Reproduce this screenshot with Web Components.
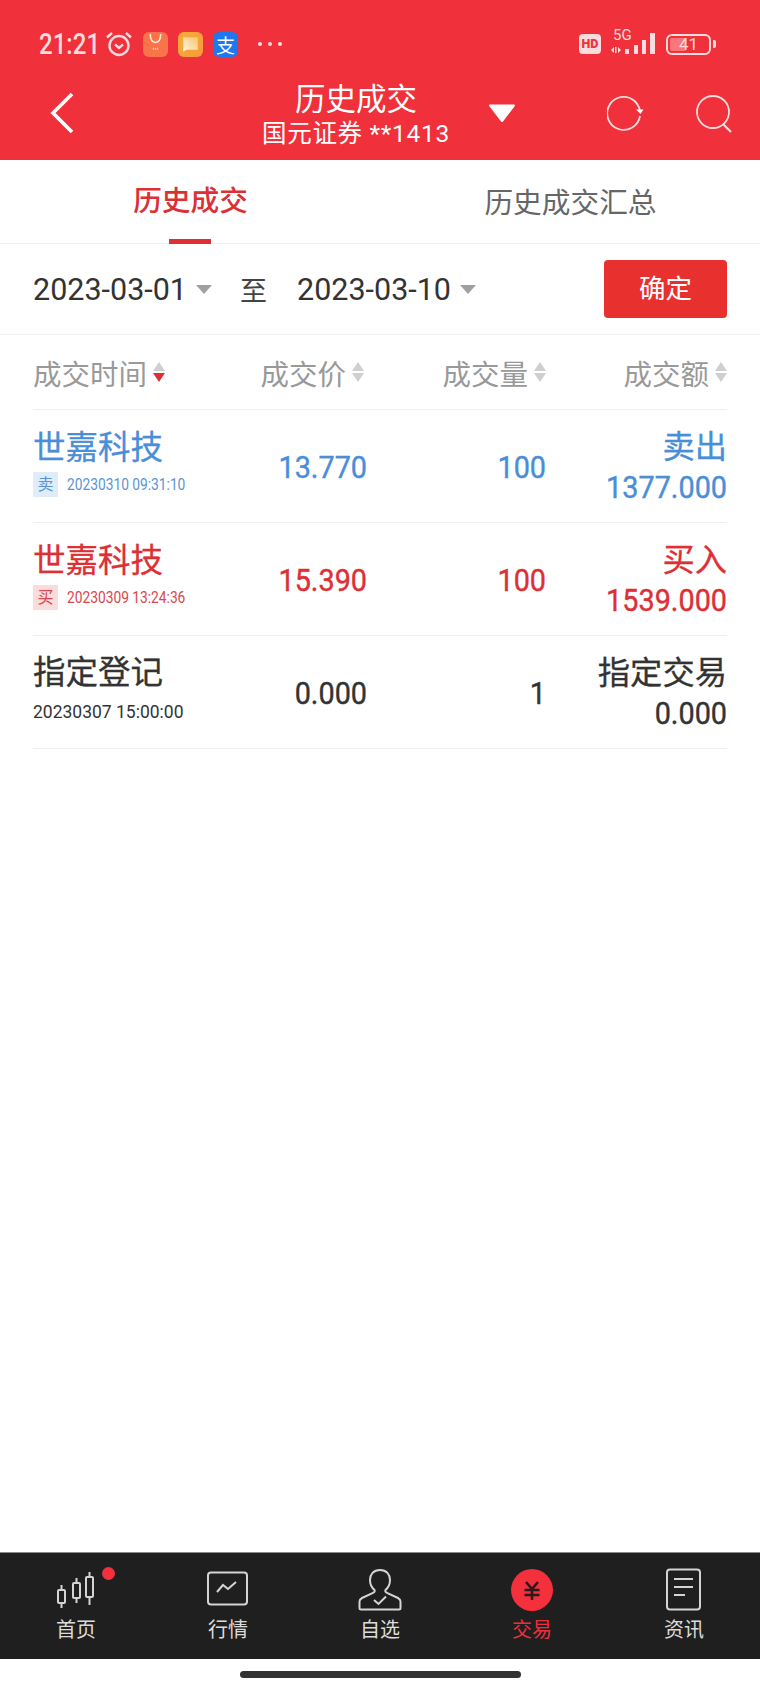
<!DOCTYPE html>
<html lang="zh">
<head>
<meta charset="utf-8">
<title>历史成交</title>
<style>
  html, body { margin: 0; padding: 0; background: #fff; }
  body { font-family: Roboto, "Noto Sans CJK SC", sans-serif; }
  trade-app { width: 760px; height: 1689px; }
</style>
</head>
<body>
<trade-app>
  <status-bar slot="top"></status-bar>
  <nav-header slot="top" title="历史成交" account="国元证券 **1413"></nav-header>
  <tab-strip>
    <tab-item active>历史成交</tab-item>
    <tab-item>历史成交汇总</tab-item>
  </tab-strip>
  <date-filter from="2023-03-01" to="2023-03-10"></date-filter>
  <column-head></column-head>
  <trade-row kind="sell" name="世嘉科技" tag="卖" time="20230310 09:31:10" price="13.770" volume="100" action="卖出" amount="1377.000"></trade-row>
  <trade-row kind="buy" name="世嘉科技" tag="买" time="20230309 13:24:36" price="15.390" volume="100" action="买入" amount="1539.000"></trade-row>
  <trade-row kind="plain" name="指定登记" time="20230307 15:00:00" price="0.000" volume="1" action="指定交易" amount="0.000"></trade-row>
  <bottom-nav slot="bottom">
    <nav-item label="首页" dot>
      <svg width="46" height="45" viewBox="0 0 46 45" fill="none" stroke="#d4d4d4" stroke-width="2">
        <rect x="5" y="23" width="7" height="13" rx="1"/><path d="M8.500 18v5M8.500 36v5"/>
        <rect x="20" y="16" width="7" height="15" rx="1"/><path d="M23.500 11v5M23.500 31v5"/>
        <rect x="33" y="10" width="7" height="20" rx="1"/><path d="M36.500 5v5M36.500 30v8"/>
      </svg>
    </nav-item>
    <nav-item label="行情">
      <svg width="46" height="45" viewBox="0 0 46 45" fill="none" stroke="#d4d4d4" stroke-width="2">
        <rect x="3" y="5.500" width="39" height="32" rx="3"/>
        <path d="M12 25l6-7 5 4 8-7"/>
      </svg>
    </nav-item>
    <nav-item label="自选">
      <svg width="46" height="45" viewBox="0 0 46 45" fill="none" stroke="#d4d4d4" stroke-width="2">
        <path d="M23 3c-6.500 0-10 4.500-10 10 0 4 1.500 7.500 4.500 10 .8 1.500-.5 2.500-2 3.200L5 31c-1.500.8-2.500 2-2.500 3.500V41c0 1 .7 1.500 1.500 1.500h38c.8 0 1.500-.5 1.500-1.500v-6.500c0-1.500-1-2.700-2.500-3.500l-10.500-4.800c-1.500-.7-2.800-1.700-2-3.200 3-2.500 4.500-6 4.500-10C33 7.500 29.500 3 23 3z"/>
        <path d="M17 33l4.500 4 7.500-7.500"/>
      </svg>
    </nav-item>
    <nav-item label="交易" active>
      <svg width="46" height="45" viewBox="0 0 46 45">
        <circle cx="23" cy="23" r="21" fill="#f3303c"/>
        <path d="M17 15l6 7 6-7M15.500 23h15M15.500 28h15M23 22v11" fill="none" stroke="#2a1a1c" stroke-width="2.600"/>
      </svg>
    </nav-item>
    <nav-item label="资讯">
      <svg width="46" height="45" viewBox="0 0 46 45" fill="none" stroke="#d4d4d4" stroke-width="2">
        <rect x="6" y="2.500" width="33" height="40" rx="3"/>
        <path d="M13 12h19M13 20h19M13 28h11"/>
      </svg>
    </nav-item>
  </bottom-nav>
  <div slot="bottom" class="home-strip"><span></span></div>
</trade-app>

<script>
const RED = '#dc3035';
const BLUE = '#4a8ed8';
const TOP_RED = '#f0303a';

class TradeApp extends HTMLElement {
  constructor() {
    super();
    this.attachShadow({ mode: 'open' }).innerHTML = `
      <style>
        :host { display: flex; flex-direction: column; background: #fff; }
        main { flex: 1; display: block; }
        ::slotted(.home-strip) { height: 30px; display: flex; justify-content: center; padding-top: 12px; box-sizing: border-box; }
      </style>
      <slot name="top"></slot>
      <main><slot></slot></main>
      <slot name="bottom"></slot>
    `;
  }
}

class StatusBar extends HTMLElement {
  constructor() {
    super();
    this.attachShadow({ mode: 'open' }).innerHTML = `
      <style>
        :host { display: flex; align-items: center; height: 72px; padding: 16px 44px 0 39px; box-sizing: border-box; background: ${TOP_RED}; color: #fbdcdc; }
        .time { font-size: 29px; width: 60px; white-space: nowrap; transform: scaleX(.83); transform-origin: left center; font-weight: 500; }
        svg { display: block; flex: none; }
        .clock { margin-left: 6px; }
        .apps { display: flex; gap: 10px; margin-left: 10px; align-items: center; }
        .app { width: 25px; height: 25px; border-radius: 6px; position: relative; display: flex; justify-content: center; align-items: center; overflow: hidden; }
        .mi { background: #f9744a; }
        .note { background: linear-gradient(135deg, #f7ad3a, #f89a3c); }
        .pay { background: #1e78ee; color: #fff; font-size: 19px; line-height: 25px; overflow: visible; font-family: "Noto Sans CJK SC", sans-serif; }
        .dots { display: flex; gap: 6px; margin-left: 20px; }
        .dots i { width: 4px; height: 4px; border-radius: 50%; background: #fbdcdc; }
        .right { margin-left: auto; display: flex; align-items: center; }
        .hd { width: 22px; height: 20px; border-radius: 4px; background: #fbdcdc; color: ${TOP_RED}; font-size: 12.500px; font-weight: 900; line-height: 20px; text-align: center; }
        .net { position: relative; width: 46px; height: 24px; margin-left: 9px; }
        .net span { position: absolute; left: 3px; top: -5px; font-size: 15px; line-height: 16px; }
        .net svg { position: absolute; left: 0; top: 0; }
        .bat { margin-left: 10px; width: 45px; height: 21px; border: 2px solid #fbdcdc; border-radius: 6px; box-sizing: border-box; position: relative; font-size: 17px; line-height: 17px; text-align: center; overflow: hidden; }
        .bat::before { content: ""; position: absolute; left: 2px; top: 2px; bottom: 2px; width: 40%; background: #f9777c; border-radius: 2px; }
        .bat b { position: relative; font-weight: 400; }
        .nub { width: 3px; height: 8px; margin-left: 2px; border-radius: 0 2px 2px 0; background: #fbdcdc; }
      </style>
      <span class="time">21:21</span>
      <svg class="clock" width="28" height="26" viewBox="0 0 28 26" fill="none" stroke="#fbdcdc" stroke-width="2.400">
        <circle cx="14" cy="14.500" r="9.500"/>
        <path d="M10 13.500l4 3.500 4-3.500M2 6.500L7 2M26 6.500L21 2"/>
      </svg>
      <div class="apps">
        <div class="app mi">
          <svg width="25" height="25" viewBox="0 0 24 24" fill="none" stroke="#ffe9dc" stroke-width="1.500"><path d="M7 2c0 5 2 8 5 8s5-3 5-8"/><path d="M10 15v2M12 15v2M14 15v2" stroke-width="1"/></svg>
        </div>
        <div class="app note">
          <svg width="25" height="25" viewBox="0 0 24 24"><defs><linearGradient id="n" x1="1" y1="0" x2="0" y2="1"><stop offset="0" stop-color="#f9c56a"/><stop offset="1" stop-color="#fff6e2"/></linearGradient></defs><path d="M5 5h14v12H8l-3 2z" fill="url(#n)"/></svg>
        </div>
        <div class="app pay">支</div>
      </div>
      <div class="dots"><i></i><i></i><i></i></div>
      <div class="right">
        <div class="hd">HD</div>
        <div class="net">
          <span>5G</span>
          <svg width="46" height="24" viewBox="0 0 46 24" fill="#fbdcdc">
            <path d="M1 18l3-3v6zM5 15h1.500v6H5zM8 15l3 3-3 3zM15 17h4v5h-4zM24 13h4v9h-4zM32 8h4v14h-4zM40 1h5v21h-5z"/>
          </svg>
        </div>
        <div class="bat"><b>41</b></div>
        <div class="nub"></div>
      </div>
    `;
  }
}

class NavHeader extends HTMLElement {
  connectedCallback() {
    this.attachShadow({ mode: 'open' }).innerHTML = `
      <style>
        :host { display: flex; align-items: flex-start; height: 88px; background: ${TOP_RED}; color: #fff; }
        svg { display: block; flex: none; }
        .back { margin: 19px 0 0 48px; }
        .titles { width: 220px; margin: 0 0 0 170px; text-align: center; }
        .title { font-size: 30.500px; line-height: 38px; margin-top: 9px; }
        .sub { font-size: 24.500px; line-height: 30px; white-space: nowrap; letter-spacing: .7px; }
        .caret { margin: 31px 0 0 22px; }
        .refresh { margin: 23px 0 0 91px; }
        .search { margin: 23px 0 0 50px; }
      </style>
      <svg class="back" width="28" height="44" viewBox="0 0 28 44" fill="none" stroke="#fff" stroke-width="3.600"><path d="M24 3L5 22l19 19"/></svg>
      <div class="titles">
        <div class="title">${this.getAttribute('title')}</div>
        <div class="sub">${this.getAttribute('account')}</div>
      </div>
      <svg class="caret" width="28" height="20" viewBox="0 0 28 20"><path d="M2 1.500h24a1 1 0 0 1 .8 1.600L15 18.500a1.300 1.300 0 0 1-2 0L1.200 3.100A1 1 0 0 1 2 1.500z" fill="#fff"/></svg>
      <svg class="refresh" width="38" height="38" viewBox="0 0 38 38" fill="none" stroke="#fbdcdc" stroke-width="1.800">
        <path d="M33 21a16.500 16.500 0 1 1-6-15.500c3 2.500 5 6 6 10"/>
        <path d="M29 14.500l4.500 4.500 3-4.500z" fill="#fff" stroke="none"/>
      </svg>
      <svg class="search" width="38" height="38" viewBox="0 0 38 38" fill="none" stroke="#fbdcdc" stroke-width="1.800">
        <circle cx="18" cy="17" r="16"/>
        <path d="M28 29l8 8" stroke-width="2.200"/>
      </svg>
    `;
  }
}

class TabStrip extends HTMLElement {
  constructor() {
    super();
    this.attachShadow({ mode: 'open' }).innerHTML = `
      <style>
        :host { display: flex; height: 84px; box-sizing: border-box; border-bottom: 1px solid #f0f0f0; }
      </style>
      <slot></slot>
    `;
  }
}

class TabItem extends HTMLElement {
  constructor() {
    super();
    this.attachShadow({ mode: 'open' }).innerHTML = `
      <style>
        :host { flex: none; width: 379px; display: flex; flex-direction: column; align-items: center; font-size: 28.700px; line-height: 40px; color: #666; padding-top: 23px; box-sizing: border-box; position: relative; }
        :host([active]) { width: 381px; padding-top: 21px; color: ${RED}; font-weight: 500; }
        :host([active]) .bar { position: absolute; bottom: -1px; left: 169px; width: 42px; height: 5px; background: ${RED}; }
      </style>
      <span class="label"><slot></slot></span>
      <span class="bar"></span>
    `;
  }
}

class DateFilter extends HTMLElement {
  connectedCallback() {
    const caret = `<svg width="16" height="9" viewBox="0 0 16 9"><path d="M0 0h16L8 9z" fill="#a0a0a0"/></svg>`;
    this.attachShadow({ mode: 'open' }).innerHTML = `
      <style>
        :host { display: flex; align-items: center; height: 91px; padding: 0 33px; box-sizing: border-box; border-bottom: 1px solid #f0f0f0; color: #333; font-size: 30.500px; }
        svg { margin-left: 9px; margin-top: 1px; }
        .to { margin: 0 30px 0 28px; font-size: 27px; color: #444; }
        button { all: unset; margin-left: auto; width: 123px; height: 58px; background: #e8302f; border-radius: 4px; color: #fff; font-size: 26.500px; text-align: center; line-height: 58px; }
      </style>
      <span>${this.getAttribute('from')}</span>${caret}
      <span class="to">至</span>
      <span>${this.getAttribute('to')}</span>${caret}
      <button>确定</button>
    `;
  }
}

class SortMark extends HTMLElement {
  constructor() {
    super();
    this.attachShadow({ mode: 'open' }).innerHTML = `
      <style>
        :host { display: inline-block; width: 12px; height: 20px; margin-left: 6px; flex: none; }
        svg { display: block; }
      </style>
      <svg width="12" height="20" viewBox="0 0 12 20">
        <path d="M6 0l6 9H0z" fill="#cfcfcf"/>
        <path d="M0 11h12l-6 9z" fill="${this.hasAttribute('down') ? RED : '#cfcfcf'}"/>
      </svg>
    `;
  }
}

class ColumnHead extends HTMLElement {
  constructor() {
    super();
    this.attachShadow({ mode: 'open' }).innerHTML = `
      <style>
        :host { display: block; padding: 0 33px; }
        .grid { display: grid; grid-template-columns: 170px 161px 182px 181px; height: 75px; align-items: center; border-bottom: 1px solid #f0f0f0; box-sizing: border-box; color: #999; font-size: 28.500px; }
        .cell { display: flex; align-items: center; justify-content: flex-end; }
        .cell:first-child { justify-content: flex-start; }
      </style>
      <div class="grid">
        <div class="cell">成交时间<sort-mark down></sort-mark></div>
        <div class="cell">成交价<sort-mark></sort-mark></div>
        <div class="cell">成交量<sort-mark></sort-mark></div>
        <div class="cell">成交额<sort-mark></sort-mark></div>
      </div>
    `;
  }
}

class TradeRow extends HTMLElement {
  connectedCallback() {
    const tag = this.getAttribute('tag');
    const attr = (n) => this.getAttribute(n);
    this.attachShadow({ mode: 'open' }).innerHTML = `
      <style>
        :host { display: block; padding: 0 33px; }
        .grid { display: grid; grid-template-columns: 200px 134px 179px 181px; height: 113px; box-sizing: border-box; align-items: center; border-bottom: 1px solid #f0f0f0; color: var(--c); }
        :host([kind="sell"]) { --c: ${BLUE}; --tag: #dfecf9; --time: #5b94d4; }
        :host([kind="buy"]) { --c: ${RED}; --tag: #fadcdc; --time: #d8474d; }
        :host([kind="plain"]) { --c: #333; --time: #333; }
        .who { padding-bottom: 5px; }
        .name { font-size: 32.500px; line-height: 36px; -webkit-text-stroke: .3px currentColor; }
        .meta { display: flex; align-items: center; margin-top: 6px; height: 25px; }
        :host([kind="plain"]) .meta { margin-top: 9px; }
        .tag { width: 25px; height: 25px; background: var(--tag); color: var(--time); font-size: 16px; line-height: 25px; text-align: center; margin-right: 9px; flex: none; }
        .time { font-size: 16px; color: var(--time); white-space: nowrap; transform: scaleX(.86); transform-origin: left center; }
        :host([kind="plain"]) .time { font-size: 17.500px; transform: none; }
        .num { display: block; font-size: 32px; line-height: 40px; -webkit-text-stroke: .4px currentColor; text-align: right; transform: scaleX(.9); transform-origin: right center; margin-top: 2px; }
        .last { text-align: right; margin-top: 2px; }
        .last .num { margin-top: 0; }
        .action { font-size: 32.300px; line-height: 40px; text-align: right; -webkit-text-stroke: .3px currentColor; }
      </style>
      <div class="grid">
        <div class="who">
          <div class="name">${attr('name')}</div>
          <div class="meta">${tag ? `<span class="tag">${tag}</span>` : ''}<span class="time">${attr('time')}</span></div>
        </div>
        <span class="num">${attr('price')}</span>
        <span class="num">${attr('volume')}</span>
        <div class="last">
          <div class="action">${attr('action')}</div>
          <span class="num">${attr('amount')}</span>
        </div>
      </div>
    `;
  }
}

class BottomNav extends HTMLElement {
  constructor() {
    super();
    this.attachShadow({ mode: 'open' }).innerHTML = `
      <style>
        :host { display: grid; grid-template-columns: repeat(5, 152px); height: 107px; box-sizing: border-box; background: #1f1f1f; border-top: 1px solid #8a8a8a; padding-top: 14px; }
      </style>
      <slot></slot>
    `;
  }
}

class NavItem extends HTMLElement {
  connectedCallback() {
    this.attachShadow({ mode: 'open' }).innerHTML = `
      <style>
        :host { display: flex; flex-direction: column; align-items: center; color: #dcdcdc; font-size: 20px; line-height: 28px; position: relative; }
        :host([active]) { color: #ee2e3c; }
        .icon { height: 45px; margin-bottom: 4px; }
        .dot { position: absolute; left: 102px; top: 0; width: 13px; height: 13px; border-radius: 50%; background: #f3303c; }
      </style>
      <div class="icon"><slot></slot></div>
      <span>${this.getAttribute('label')}</span>
      ${this.hasAttribute('dot') ? '<span class="dot"></span>' : ''}
    `;
  }
}

const homeBar = document.querySelector('.home-strip span');
homeBar.style.cssText = 'display:block;width:281px;height:7px;border-radius:4px;background:#333;';

customElements.define('trade-app', TradeApp);
customElements.define('status-bar', StatusBar);
customElements.define('nav-header', NavHeader);
customElements.define('tab-strip', TabStrip);
customElements.define('tab-item', TabItem);
customElements.define('date-filter', DateFilter);
customElements.define('sort-mark', SortMark);
customElements.define('column-head', ColumnHead);
customElements.define('trade-row', TradeRow);
customElements.define('bottom-nav', BottomNav);
customElements.define('nav-item', NavItem);
</script>
</body>
</html>
